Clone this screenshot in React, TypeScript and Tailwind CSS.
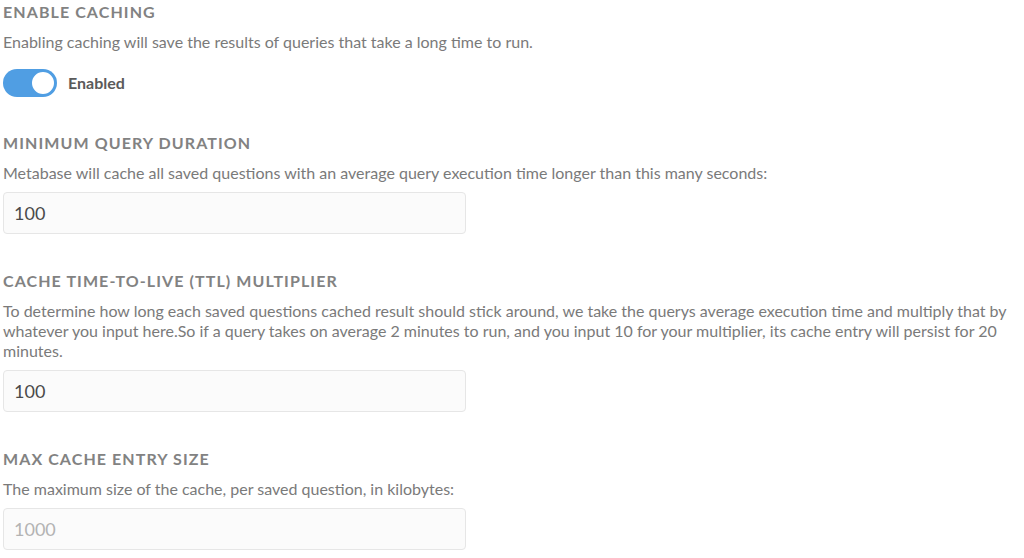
import React, { useState } from 'react';

const Heading = ({ children }: { children: React.ReactNode }) => (
  <h2 className="text-[16px] leading-[20px] font-bold uppercase tracking-[0.068em] text-[#828282]">{children}</h2>
);

const Desc = ({ children }: { children: React.ReactNode }) => (
  <p className="mt-[10px] text-[16px] leading-[20px] text-[#7a7a7a]">{children}</p>
);

const NumberInput = ({ value, placeholder }: { value?: string; placeholder?: string }) => (
  <input
    defaultValue={value}
    placeholder={placeholder}
    className="mt-[9px] block w-[463px] h-[42px] rounded-[4px] border border-[#e6e6e6] bg-[#fbfbfb] px-[10px] text-[18px] text-[#4a4a4a] placeholder:text-[#b3b3b3] outline-none"
  />
);

export default function App() {
  const [enabled, setEnabled] = useState(true);

  return (
    <div className="pl-[3px] pr-[8px] pt-[2px] bg-white min-h-screen" style={{ fontFamily: 'Lato, "Open Sans", sans-serif' }}>
      <section>
        <Heading>Enable Caching</Heading>
        <Desc>Enabling caching will save the results of queries that take a long time to run.</Desc>
        <div className="mt-[17px] flex items-center gap-[11px]">
          <button
            onClick={() => setEnabled(!enabled)}
            className={`relative w-[54px] h-[28px] rounded-full flex items-center ${enabled ? 'bg-[#509ee3] justify-end' : 'bg-[#e0e0e0] justify-start'}`}
          >
            <span className="w-[26px] h-[26px] mx-[1px] rounded-full bg-white border-2 border-[#509ee3]" />
          </button>
          <span className="text-[16px] font-bold text-[#5a5a5a]">{enabled ? 'Enabled' : 'Disabled'}</span>
        </div>
      </section>

      <section className="mt-[36px]">
        <Heading>Minimum Query Duration</Heading>
        <Desc>Metabase will cache all saved questions with an average query execution time longer than this many seconds:</Desc>
        <NumberInput value="100" />
      </section>

      <section className="mt-[37px]">
        <Heading>Cache Time-To-Live (TTL) Multiplier</Heading>
        <Desc>
          To determine how long each saved questions cached result should stick around, we take the querys average execution time and multiply that by whatever you input here.So if a query takes on average 2 minutes to run, and you input 10 for your multiplier, its cache entry will persist for 20 minutes.
        </Desc>
        <NumberInput value="100" />
      </section>

      <section className="mt-[37px]">
        <Heading>Max Cache Entry Size</Heading>
        <Desc>The maximum size of the cache, per saved question, in kilobytes:</Desc>
        <NumberInput placeholder="1000" />
      </section>
    </div>
  );
}
